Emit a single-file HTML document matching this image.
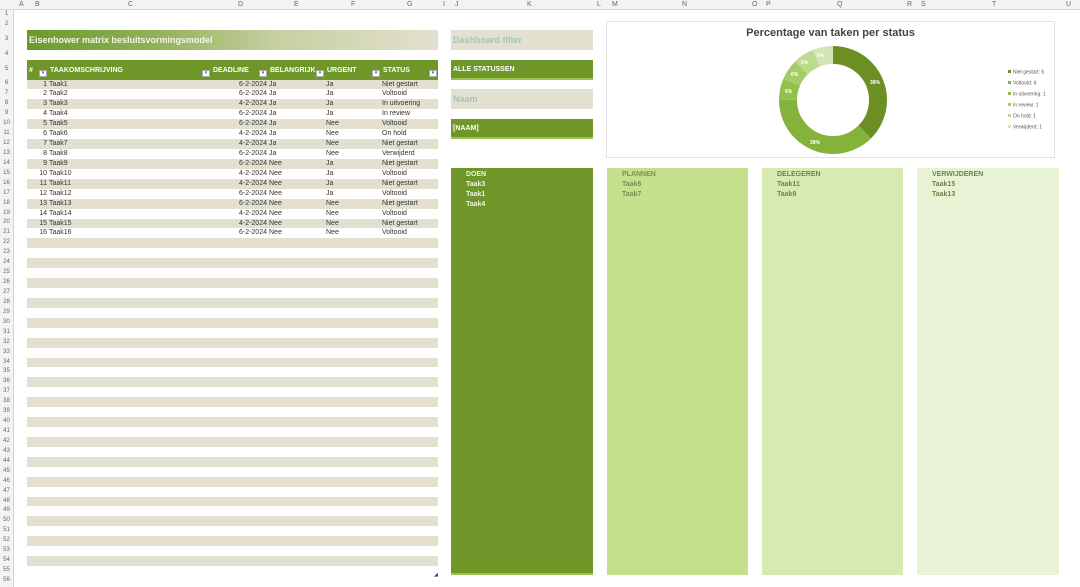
<!DOCTYPE html>
<html><head><meta charset="utf-8"><style>
*{margin:0;padding:0;box-sizing:border-box}
body{width:1080px;height:587px;overflow:hidden;background:#fff;font-family:"Liberation Sans",sans-serif;position:relative}
.a{position:absolute}
.ch{top:0;left:0;width:1080px;height:10px;background:#f3f3f3;border-bottom:1px solid #d4d4d4}
.cl{font-size:7px;color:#666;top:1px}
.rh{left:0;width:14px;background:#f3f3f3;border-right:1px solid #d4d4d4;top:10px;height:577px}
.rn{left:0;width:13px;text-align:center;font-size:6px;color:#666}
.band{left:27px;width:411px;height:9.93px;background:#e3e0cf}
.cell{font-size:7px;color:#333;white-space:nowrap;line-height:9.93px}
.hd{font-size:7px;color:#fff;font-weight:bold}
.dd{width:8px;height:7px;background:#fff;border:1px solid #aaa;font-size:5px;color:#555;text-align:center;line-height:5px}
.pn{top:168px;height:407px;width:142px;font-size:7px;font-weight:bold;padding:2px 0 0 15px;line-height:10px}
</style></head><body>
<div class="a ch"></div>
<div class="a cl" style="left:19px">A</div><div class="a cl" style="left:35px">B</div><div class="a cl" style="left:128px">C</div><div class="a cl" style="left:238px">D</div><div class="a cl" style="left:294px">E</div><div class="a cl" style="left:351px">F</div><div class="a cl" style="left:407px">G</div><div class="a cl" style="left:443px">I</div><div class="a cl" style="left:455px">J</div><div class="a cl" style="left:527px">K</div><div class="a cl" style="left:597px">L</div><div class="a cl" style="left:612px">M</div><div class="a cl" style="left:682px">N</div><div class="a cl" style="left:752px">O</div><div class="a cl" style="left:766px">P</div><div class="a cl" style="left:837px">Q</div><div class="a cl" style="left:907px">R</div><div class="a cl" style="left:921px">S</div><div class="a cl" style="left:992px">T</div><div class="a cl" style="left:1066px">U</div>
<div class="a rh"></div>
<div id="rows"></div>
<script>
var h='';var tops={1:10,2:20,3:30,4:50,5:60};
for(var n=1;n<=56;n++){var t,ht;if(n<=5){t=tops[n];ht=(n==3||n==5)?20:10;}else{t=79.5+(n-6)*9.93;ht=9.93;}
h+='<div class="a rn" style="top:'+(t+ht/2-4)+'px">'+n+'</div>';
if(n>=6&&n<=55&&n%2==0)h+='<div class="a band" style="top:'+t+'px"></div>';}
var d=[[1,'Taak1','6-2-2024','Ja','Ja','Niet gestart'],[2,'Taak2','6-2-2024','Ja','Ja','Voltooid'],[3,'Taak3','4-2-2024','Ja','Ja','In uitvoering'],[4,'Taak4','6-2-2024','Ja','Ja','In review'],[5,'Taak5','6-2-2024','Ja','Nee','Voltooid'],[6,'Taak6','4-2-2024','Ja','Nee','On hold'],[7,'Taak7','4-2-2024','Ja','Nee','Niet gestart'],[8,'Taak8','6-2-2024','Ja','Nee','Verwijderd'],[9,'Taak9','6-2-2024','Nee','Ja','Niet gestart'],[10,'Taak10','4-2-2024','Nee','Ja','Voltooid'],[11,'Taak11','4-2-2024','Nee','Ja','Niet gestart'],[12,'Taak12','6-2-2024','Nee','Ja','Voltooid'],[13,'Taak13','6-2-2024','Nee','Nee','Niet gestart'],[14,'Taak14','4-2-2024','Nee','Nee','Voltooid'],[15,'Taak15','4-2-2024','Nee','Nee','Niet gestart'],[16,'Taak16','6-2-2024','Nee','Nee','Voltooid']];
for(var i=0;i<16;i++){var t=79.5+i*9.93,r=d[i];
h+='<div class="a cell" style="top:'+t+'px;left:27px;width:20px;text-align:right">'+r[0]+'</div>';
h+='<div class="a cell" style="top:'+t+'px;left:49px">'+r[1]+'</div>';
h+='<div class="a cell" style="top:'+t+'px;left:210px;width:57px;text-align:right">'+r[2]+'</div>';
h+='<div class="a cell" style="top:'+t+'px;left:269px">'+r[3]+'</div>';
h+='<div class="a cell" style="top:'+t+'px;left:326px">'+r[4]+'</div>';
h+='<div class="a cell" style="top:'+t+'px;left:382px">'+r[5]+'</div>';}
document.getElementById('rows').innerHTML=h;
</script>
<div class="a" style="left:27px;top:30px;width:411px;height:20px;background:linear-gradient(90deg,#6b9a2a 0%,#8fb055 30%,#c6cfa0 60%,#e3e0cf 100%)"></div>
<div class="a" style="left:29px;top:35px;font-size:9px;font-weight:bold;color:#f4f4ea">Eisenhower matrix besluitsvormingsmodel</div>
<div class="a" style="left:27px;top:60px;width:411px;height:20px;background:#6f9628"></div>
<div class="a hd" style="left:29px;top:67px">#</div>
<div class="a hd" style="left:50px;top:67px">TAAKOMSCHRIJVING</div>
<div class="a hd" style="left:213px;top:67px">DEADLINE</div>
<div class="a hd" style="left:270px;top:67px">BELANGRIJK</div>
<div class="a hd" style="left:327px;top:67px">URGENT</div>
<div class="a hd" style="left:383px;top:67px">STATUS</div>
<div class="a dd" style="left:39px;top:70px">▾</div><div class="a dd" style="left:202px;top:70px">▾</div><div class="a dd" style="left:259px;top:70px">▾</div><div class="a dd" style="left:316px;top:70px">▾</div><div class="a dd" style="left:372px;top:70px">▾</div><div class="a dd" style="left:429px;top:70px">▾</div>
<div class="a" style="left:434px;top:572px;font-size:5px;color:#336">◢</div>

<div class="a" style="left:451px;top:30px;width:142px;height:20px;background:#e3e0cf;color:#a9c4b4;font-size:9px;font-weight:bold;padding:5px 2px">Dashboard filter</div>
<div class="a" style="left:451px;top:60px;width:142px;height:20px;background:#6f9628;border-bottom:2px solid #9cc44a;color:#fff;font-size:7px;font-weight:bold;padding:6px 2px">ALLE STATUSSEN</div>
<div class="a" style="left:451px;top:89px;width:142px;height:20px;background:#e3e0cf;color:#a9c4b4;font-size:9px;font-weight:bold;padding:5px 2px">Naam</div>
<div class="a" style="left:451px;top:119px;width:142px;height:20px;background:#6f9628;border-bottom:2px solid #9cc44a;color:#fff;font-size:7px;font-weight:bold;padding:6px 2px">[NAAM]</div>

<div class="a pn" style="left:451px;background:#6f9628;color:#eef3e0;border-bottom:2px solid #9cc44a">DOEN<br>Taak3<br>Taak1<br>Taak4</div>
<div class="a pn" style="left:607px;background:#c5e08c;color:#7a8f4f;width:141px">PLANNEN<br>Taak6<br>Taak7</div>
<div class="a pn" style="left:762px;background:#d7eab0;color:#6f8350;width:141px">DELEGEREN<br>Taak11<br>Taak9</div>
<div class="a pn" style="left:917px;background:#e8f3d6;color:#6f8350">VERWIJDEREN<br>Taak15<br>Taak13</div>

<div class="a" style="left:606px;top:21px;width:449px;height:137px;border:1px solid #e2e2e2;background:#fff"></div>
<div class="a" style="left:606px;top:27px;width:449px;text-align:center;font-size:11px;font-weight:bold;color:#444">Percentage van taken per status</div>
<svg class="a" style="left:606px;top:21px" width="449" height="137">
<g transform="translate(227,79) rotate(-90)">
<circle r="45" fill="none" stroke="#6b8f23" stroke-width="18" stroke-dasharray="106.03 300" stroke-dashoffset="0"/>
<circle r="45" fill="none" stroke="#85b23a" stroke-width="18" stroke-dasharray="106.03 300" stroke-dashoffset="-106.03"/>
<circle r="45" fill="none" stroke="#93c04a" stroke-width="18" stroke-dasharray="17.67 300" stroke-dashoffset="-212.06"/>
<circle r="45" fill="none" stroke="#a6cc66" stroke-width="18" stroke-dasharray="17.67 300" stroke-dashoffset="-229.73"/>
<circle r="45" fill="none" stroke="#bcd98c" stroke-width="18" stroke-dasharray="17.67 300" stroke-dashoffset="-247.4"/>
<circle r="45" fill="none" stroke="#d3e6b4" stroke-width="18" stroke-dasharray="17.67 300" stroke-dashoffset="-265.07"/>
</g>
<g font-size="5" fill="#fff" font-weight="bold" font-family="Liberation Sans">
<text x="264" y="63">38%</text><text x="204" y="123">38%</text><text x="179" y="72">6%</text><text x="185" y="55">6%</text><text x="195" y="43">6%</text><text x="211" y="36">6%</text>
</g>
<g font-size="5" fill="#555" font-family="Liberation Sans">
<rect x="402" y="49" width="3" height="3" fill="#6b8f23"/><text x="407" y="52.5">Niet gestart: 6</text>
<rect x="402" y="60" width="3" height="3" fill="#85b23a"/><text x="407" y="63.5">Voltooid: 6</text>
<rect x="402" y="71" width="3" height="3" fill="#93c04a"/><text x="407" y="74.5">In uitvoering: 1</text>
<rect x="402" y="82" width="3" height="3" fill="#a6cc66"/><text x="407" y="85.5">In review: 1</text>
<rect x="402" y="93" width="3" height="3" fill="#bcd98c"/><text x="407" y="96.5">On hold: 1</text>
<rect x="402" y="104" width="3" height="3" fill="#d3e6b4"/><text x="407" y="107.5">Verwijderd: 1</text>
</g>
</svg>
</body></html>
